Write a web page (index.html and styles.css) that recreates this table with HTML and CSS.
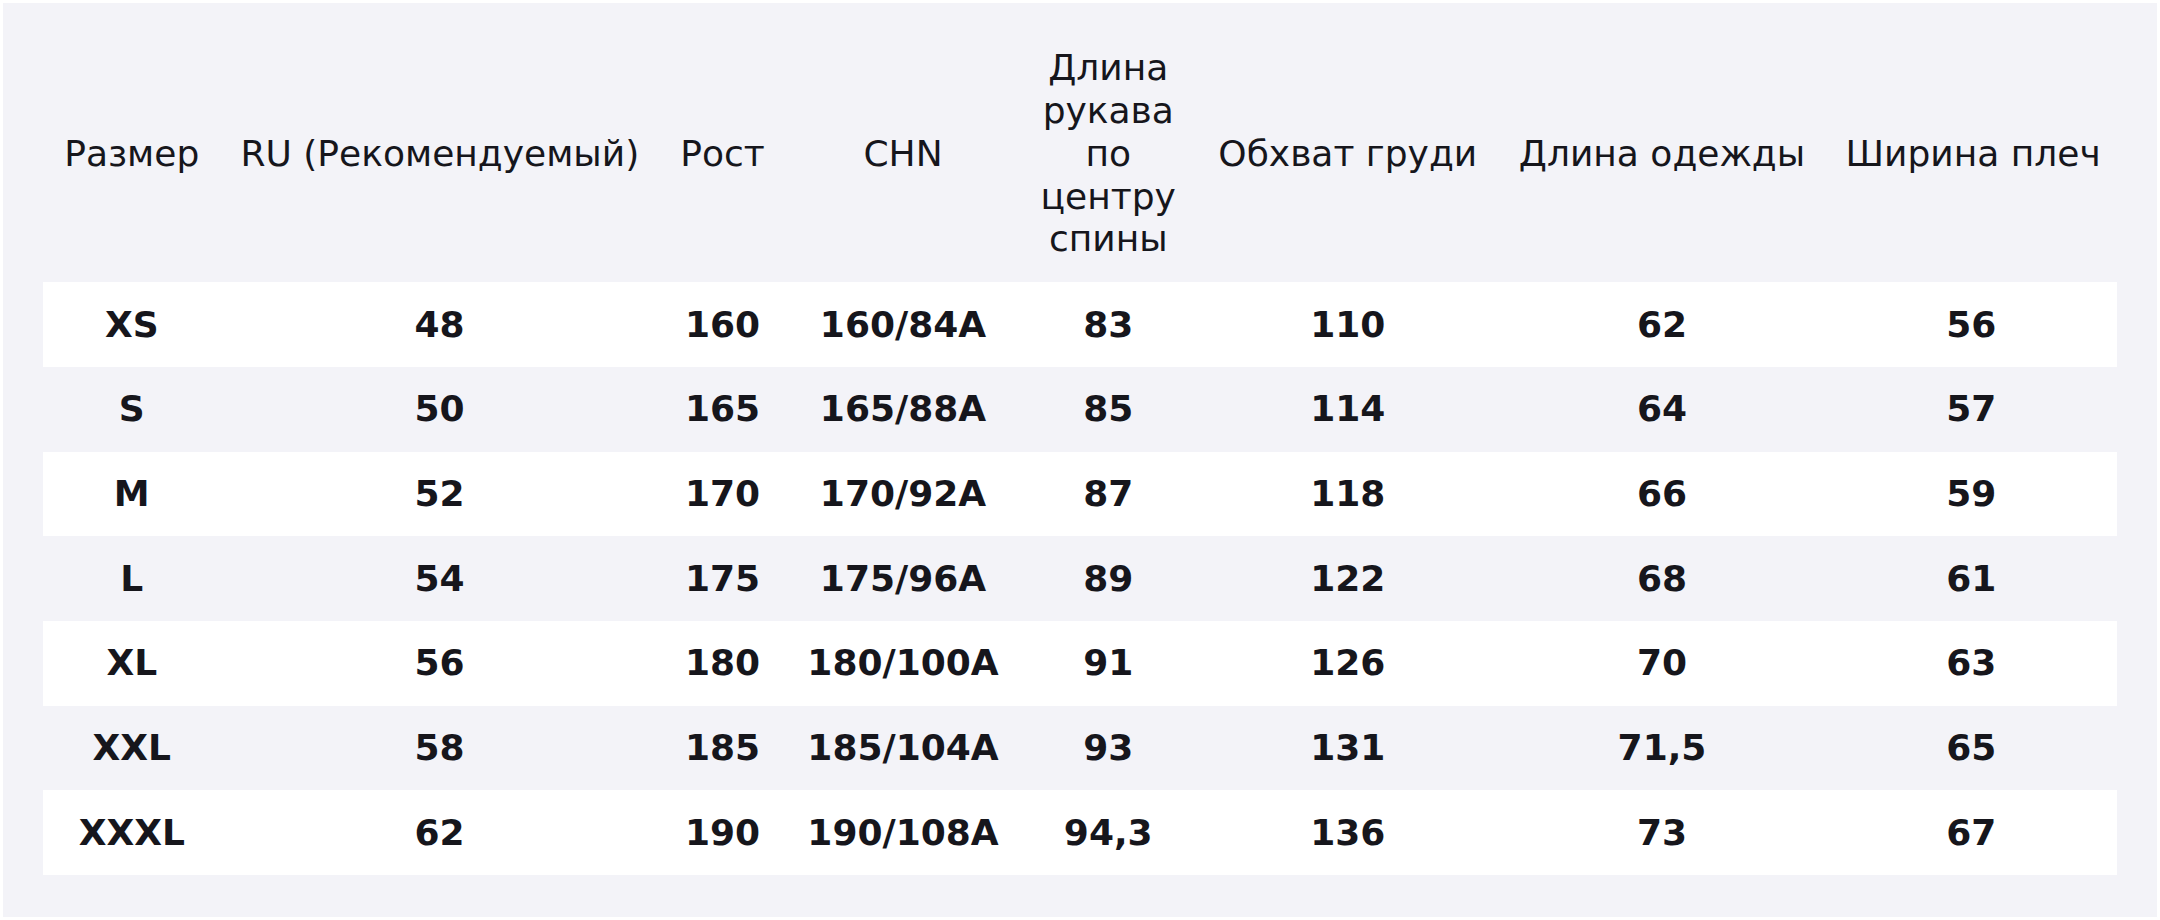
FILE: index.html
```html
<!DOCTYPE html>
<html lang="ru">
<head>
<meta charset="utf-8">
<title>Таблица размеров</title>
<link rel="stylesheet" href="styles.css">
</head>
<body>
<div class="panel">
  <table class="sizes">
    <colgroup>
      <col class="c1"><col class="c2"><col class="c3"><col class="c4">
      <col class="c5"><col class="c6"><col class="c7"><col class="c8">
    </colgroup>
    <thead>
      <tr>
        <th>Размер</th>
        <th>RU (Рекомендуемый)</th>
        <th>Рост</th>
        <th>CHN</th>
        <th class="wrap">Длина рукава по центру спины</th>
        <th>Обхват груди</th>
        <th>Длина одежды</th>
        <th>Ширина плеч</th>
      </tr>
    </thead>
    <tbody>
      <tr><td>XS</td><td>48</td><td>160</td><td>160/84A</td><td>83</td><td>110</td><td>62</td><td>56</td></tr>
      <tr><td>S</td><td>50</td><td>165</td><td>165/88A</td><td>85</td><td>114</td><td>64</td><td>57</td></tr>
      <tr><td>M</td><td>52</td><td>170</td><td>170/92A</td><td>87</td><td>118</td><td>66</td><td>59</td></tr>
      <tr><td>L</td><td>54</td><td>175</td><td>175/96A</td><td>89</td><td>122</td><td>68</td><td>61</td></tr>
      <tr><td>XL</td><td>56</td><td>180</td><td>180/100A</td><td>91</td><td>126</td><td>70</td><td>63</td></tr>
      <tr><td>XXL</td><td>58</td><td>185</td><td>185/104A</td><td>93</td><td>131</td><td>71,5</td><td>65</td></tr>
      <tr><td>XXXL</td><td>62</td><td>190</td><td>190/108A</td><td>94,3</td><td>136</td><td>73</td><td>67</td></tr>
    </tbody>
  </table>
</div>
</body>
</html>
```
FILE: styles.css
```css
html {
  background: #ffffff;
}

body {
  margin: 3px;
  font-family: "DejaVu Sans", sans-serif;
  color: #16161c;
}

.panel {
  background: #f3f3f8;
  padding: 23px 40px 0 40px;
  height: 914px;
  box-sizing: border-box;
}

.sizes {
  width: 2074px;
  table-layout: fixed;
  border-collapse: collapse;
  border-spacing: 0;
}

.c1 { width: 177.5px; }
.c2 { width: 438px; }
.c3 { width: 128px; }
.c4 { width: 233px; }
.c5 { width: 177.5px; }
.c6 { width: 301.5px; }
.c7 { width: 327px; }
.c8 { width: 291.5px; }

.sizes th {
  font-weight: normal;
  font-size: 36px;
  line-height: 42.7px;
  text-align: center;
  vertical-align: middle;
  padding: 21.4px 20px;
  white-space: nowrap;
}

.sizes th.wrap {
  white-space: normal;
  padding-left: 18px;
  padding-right: 18px;
}

.sizes tbody tr {
  height: 84.7px;
}

.sizes td {
  font-weight: bold;
  font-size: 36px;
  line-height: 42px;
  text-align: center;
  vertical-align: middle;
  padding: 0;
  white-space: nowrap;
}

.sizes tbody tr:nth-child(odd) {
  background: #ffffff;
}
```
